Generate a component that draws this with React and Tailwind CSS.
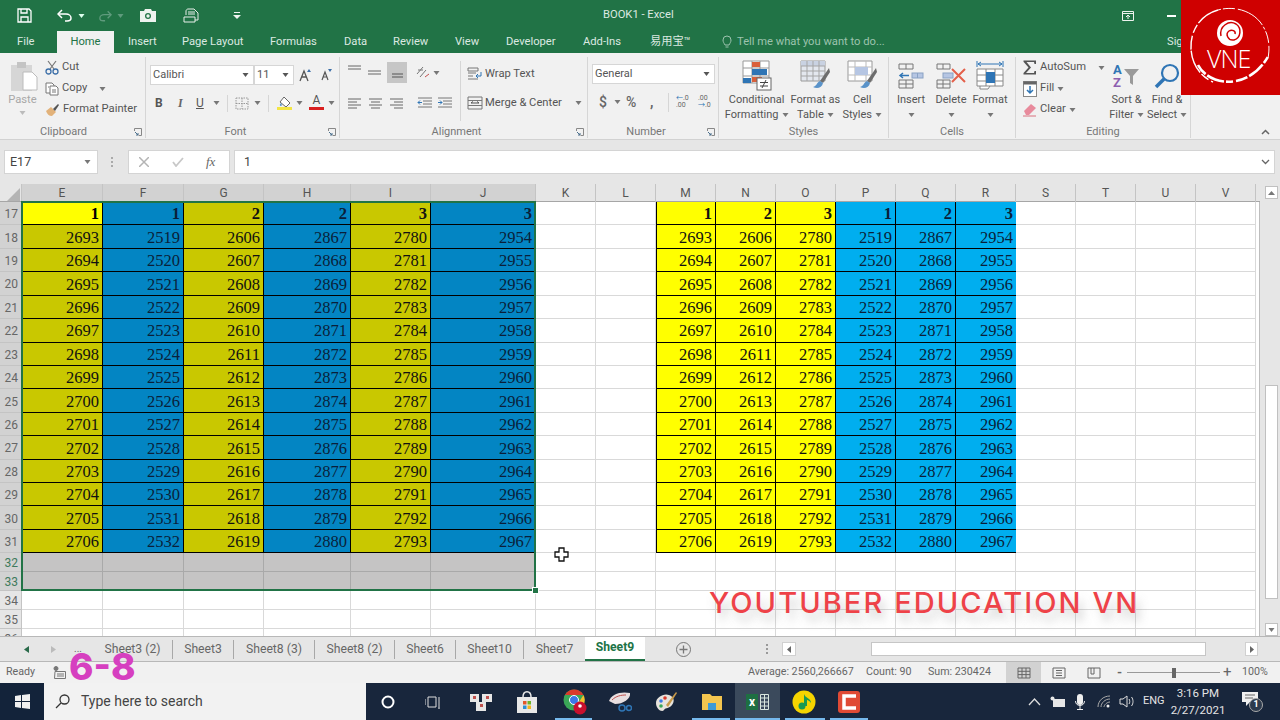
import React from "react";

const Caret = ({ c = "#555", className = "" }) => (
  <svg width="7" height="4" viewBox="0 0 7 4" className={className}><path d="M0.5 0h6L3.5 4z" fill={c} /></svg>
);

const Lines = ({ items, c = "#666" }) => (
  <svg width="15" height="13" viewBox="0 0 15 13" stroke={c} strokeWidth="1">
    {items.map(([a, b, y], i) => <path key={i} d={`M${a} ${y}H${b}`} />)}
  </svg>
);

const Launcher = () => (
  <svg width="8" height="8" viewBox="0 0 8 8" fill="none" stroke="#888"><path d="M0.5 3V0.5H7.5V7.5H4.5" /><path d="M1 4l3 3M2 7h2V5" stroke="#4a6f8c" /></svg>
);

const GroupLabel = ({ label, launcher, pr = "pr-[14px]" }) => (
  <div className={`h-[13px] mt-[1px] grid grid-cols-[1fr_auto_1fr] items-center text-[#777] text-[11px] leading-none ${launcher ? pr : ""}`}>
    <span />
    <span>{label}</span>
    <span className={`justify-self-end flex ${launcher ? (pr === "pr-[14px]" ? "-mr-[11px]" : "-mr-[15px]") : ""}`}>{launcher && <Launcher />}</span>
  </div>
);

const Group = ({ w, label, launcher, pr, children }) => (
  <div className={`${w} mt-[4px] h-[81px] flex flex-col border-r border-[#d6d6d6] shrink-0`}>
    <div className="h-[67px] flex">{children}</div>
    <GroupLabel label={label} launcher={launcher} pr={pr} />
  </div>
);

const Combo = ({ w, text }) => (
  <div className={`${w} h-[20px] bg-white border border-[#d6d6d6] flex items-center justify-between pl-[2px] pr-[4px] text-[#555] text-[11px]`}>
    <span>{text}</span><Caret />
  </div>
);

const BigBtn = ({ w, icon, l1, l2, caret = true }) => (
  <div className={`${w} flex flex-col items-center text-[#555] text-[11px] leading-[15px]`}>
    <div className="h-[32px] mt-[3px] flex items-center justify-center">{icon}</div>
    <div className="whitespace-nowrap">{l1}</div>
    <div className="flex items-center gap-[3px] whitespace-nowrap h-[15px]">{l2}{caret && <Caret c="#777" />}</div>
  </div>
);

const CondIcon = () => (
  <svg width="30" height="32" viewBox="0 0 30 32">
    <path d="M1 1h26v22H1zM1 8h26M1 16h26M10 1v22M18 1v22" fill="#fff" stroke="#999" />
    <rect x="10" y="2" width="8" height="5" fill="#d9603b" /><rect x="10" y="9" width="15" height="6" fill="#2f75b5" /><rect x="10" y="17" width="10" height="5" fill="#d9603b" />
    <rect x="1" y="18" width="8" height="5" fill="#2f75b5" />
    <rect x="15" y="18" width="14" height="12" fill="#fff" stroke="#666" />
    <path d="M18 22.500h8M18 26h8M24 20l-4 8" stroke="#444" fill="none" />
  </svg>
);

const TableIcon = () => (
  <svg width="30" height="32" viewBox="0 0 30 32">
    <path d="M1 1h24v20H1z" fill="#e3e7ee" stroke="#999" />
    <rect x="1" y="1" width="24" height="5" fill="#c9d2e2" />
    <path d="M1 6h24M1 11h24M1 16h24M7 1v20M13 1v20M19 1v20" stroke="#a5a5a5" fill="none" />
    <path d="M29 8l-9 13 3 2 7-11z" fill="#6d6d6d" /><path d="M20 21c-3 1-3 5-7 6 4 2 9 1 10-4z" fill="#5a93c9" />
  </svg>
);

const CellStyleIcon = () => (
  <svg width="30" height="32" viewBox="0 0 30 32">
    <path d="M1 1h24v20H1z" fill="#fff" stroke="#999" />
    <path d="M1 7h24M1 15h24M8 1v20M19 1v20" stroke="#bbb" fill="none" />
    <rect x="8" y="7" width="13" height="8" fill="#b6c6e3" />
    <path d="M29 8l-9 13 3 2 7-11z" fill="#6d6d6d" /><path d="M20 21c-3 1-3 5-7 6 4 2 9 1 10-4z" fill="#5a93c9" />
  </svg>
);

const InsertIcon = () => (
  <svg width="26" height="26" viewBox="0 0 26 26" fill="none" stroke="#777">
    <path d="M1 1h14v5H1zM8 1v5M1 17h14v8H1zM1 21h14M8 17v8" />
    <rect x="14" y="10" width="11" height="5" fill="#b6c6e3" stroke="#8aa2c4" /><path d="M19.500 10v5" stroke="#8aa2c4" />
    <path d="M11 12.500H2M5 10l-3 2.500 3 2.500" stroke="#2f75b5" strokeWidth="1.500" />
  </svg>
);

const DeleteIcon = () => (
  <svg width="30" height="26" viewBox="0 0 30 26" fill="none" stroke="#777">
    <path d="M1 1h13v5H1zM7 1v5M1 17h13v8H1zM1 21h13M7 17v8" />
    <rect x="7" y="10" width="10" height="5" fill="#b6c6e3" stroke="#8aa2c4" />
    <path d="M16 6l13 13M29 6L16 19" stroke="#e4604a" strokeWidth="2" />
  </svg>
);

const FormatIcon = () => (
  <svg width="28" height="32" viewBox="0 0 28 32" fill="none" stroke="#888">
    <path d="M1 1v6M27 1v6M2 4h24M2 4l3-2M2 4l3 2M26 4l-3-2M26 4l-3 2" stroke="#2f75b5" />
    <path d="M1 9h26v17H1zM1 15h26M1 21h26M10 9v17M19 9v17M4 26v3h8l2-3" fill="#fff" />
    <rect x="10" y="12" width="9" height="11" fill="#2f75b5" stroke="none" />
  </svg>
);

const Ribbon = () => (
  <div className="h-[87px] bg-[#f1f1f1] border-b border-[#d2d2d2] flex text-[#555] text-[11.2px]">
    <Group w="w-[146px]" label="Clipboard" launcher pr="pr-[18px]">
      <div className="w-[45px] flex flex-col items-center text-[#a8a8a8]">
        <svg width="28" height="32" viewBox="0 0 28 32" className="mt-[4px] ml-[3px]">
          <rect x="1" y="4" width="21" height="26" fill="#d6d6d6" /><rect x="7" y="1" width="9" height="6" fill="#c4c4c4" />
          <path d="M13 11h9l5 5v13H13z" fill="#fff" stroke="#bcbcbc" />
        </svg>
        <div className="-mt-[1px] text-[11.2px] leading-[15px]">Paste</div>
        <Caret c="#bbb" className="mt-[4px]" />
      </div>
      <div className="flex flex-col text-[#555]">
        <div className="h-[21px] flex items-center gap-[3px]">
          <svg width="14" height="15" viewBox="0 0 14 15" fill="none"><path d="M3 1l6 8M11 1L5 9" stroke="#777" strokeWidth="1.200" /><circle cx="3.500" cy="11.500" r="2.500" stroke="#3d6fa8" strokeWidth="1.300" /><circle cx="10.500" cy="11.500" r="2.500" stroke="#3d6fa8" strokeWidth="1.300" /></svg>
          <span>Cut</span>
        </div>
        <div className="h-[21px] flex items-center gap-[3px]">
          <svg width="14" height="14" viewBox="0 0 14 14" fill="#fff" stroke="#777"><path d="M1 1h6l2 2v8H1z" /><path d="M5 4h6l2 2v7H5z" /><path d="M3 5h1M7 8h4M7 10h4" /></svg>
          <span>Copy</span><Caret c="#777" className="ml-[9px]" />
        </div>
        <div className="h-[21px] flex items-center gap-[3px]">
          <svg width="15" height="14" viewBox="0 0 15 14"><path d="M1 8l5-4 5 5-4 4c-3 0-5-2-6-5z" fill="#e2b27a" /><path d="M8 6l5-5 1 1-4 6z" fill="#555" /></svg>
          <span>Format Painter</span>
        </div>
      </div>
    </Group>

    <Group w="w-[194px]" label="Font" launcher>
      <div className="flex flex-col pl-[4px] pt-[8px]">
        <div className="flex items-center">
          <Combo w="w-[104px]" text="Calibri" />
          <Combo w="w-[40px]" text="11" />
          <svg width="13" height="13" viewBox="0 0 13 13" className="ml-[5px]"><path d="M1 12L5 2l4 10M3 8h4" stroke="#555" fill="none" strokeWidth="1.300" /><path d="M8 3l2-3 2 3z" fill="#3d6fa8" /></svg>
          <svg width="11" height="12" viewBox="0 0 11 12" className="ml-[9px]"><path d="M1 11L4 3l3 8M2.500 8h3" stroke="#555" fill="none" strokeWidth="1.200" /><path d="M7 0l2 3 2-3z" fill="#3d6fa8" /></svg>
        </div>
        <div className="flex items-center mt-[8px] h-[20px]">
          <span className="ml-[5px] w-[23px] font-bold text-[#555] text-[12px]">B</span>
          <span className="w-[18px] italic font-bold text-[#666] text-[12px] [font-family:'Liberation_Serif',serif]">I</span>
          <span className="w-[17px] underline text-[#555] text-[12px]">U</span>
          <Caret c="#777" />
          <span className="w-px h-[17px] bg-[#d6d6d6] ml-[7px]" />
          <svg width="14" height="13" viewBox="0 0 14 13" className="ml-[7px]" fill="none" stroke="#999" strokeDasharray="1.500 1"><path d="M1 1h12v11H1zM7 1v11M1 6.500h12" /></svg>
          <Caret c="#777" className="ml-[5px]" />
          <span className="w-px h-[17px] bg-[#d6d6d6] ml-[7px]" />
          <div className="ml-[8px] flex flex-col items-center">
            <svg width="14" height="11" viewBox="0 0 14 11"><path d="M6 1l6 6-4 4-6-5z" fill="#fff" stroke="#666" /><path d="M3 7c-2 2-1 3 0 3s1-2 0-3z" fill="#5a93c9" /></svg>
            <span className="w-[15px] h-[3px] bg-[#f3e545]" />
          </div>
          <Caret c="#777" className="ml-[4px]" />
          <div className="ml-[6px] flex flex-col items-center leading-none">
            <span className="text-[12px] h-[11px] -mt-[2px] text-[#555]">A</span>
            <span className="w-[15px] h-[3px] mt-[2px] bg-[#d92020]" />
          </div>
          <Caret c="#777" className="ml-[4px]" />
        </div>
      </div>
    </Group>

    <div className="w-[248px] mt-[4px] h-[81px] flex flex-col border-r border-[#d6d6d6] shrink-0">
      <div className="h-[67px] flex">
        <div className="flex flex-col w-[121px] border-r border-[#d6d6d6] h-[60px] mt-[4px] pl-[7px]">
          <div className="flex items-center h-[23px]">
            <div className="w-[21px] flex -mt-[6px]"><Lines items={[[1, 14, 3], [1, 14, 6]]} /></div>
            <div className="w-[21px] flex -mt-[1px] ml-[-1px]"><Lines items={[[1, 14, 5], [1, 14, 8]]} /></div>
            <div className="w-[20px] h-[21px] bg-[#c6c6c6] flex items-center justify-center ml-[-1px]"><Lines items={[[2, 13, 8], [2, 13, 11]]} c="#555" /></div>
            <svg width="15" height="13" viewBox="0 0 15 13" className="ml-[9px]" fill="none" stroke="#777"><path d="M1 8l6-7M4 11l6-7M2 4h5" /><path d="M9 11l4-3" stroke="#c0504d" /></svg>
            <Caret c="#777" className="ml-[2px]" />
          </div>
          <div className="flex items-center h-[22px] mt-[8px]">
            <div className="w-[21px] flex"><Lines items={[[1, 14, 2], [1, 10, 5], [1, 14, 8], [1, 10, 11]]} /></div>
            <div className="w-[21px] flex"><Lines items={[[1, 14, 2], [3, 12, 5], [1, 14, 8], [3, 12, 11]]} /></div>
            <div className="w-[28px] flex"><Lines items={[[1, 14, 2], [5, 14, 5], [1, 14, 8], [5, 14, 11]]} /></div>
            <svg width="15" height="13" viewBox="0 0 15 13" stroke="#777"><path d="M1 1h14M6 4h9M6 7h9M1 10h14" /><path d="M5 5.500H1M3 3.500L1 5.500l2 2" stroke="#2f75b5" fill="none" /></svg>
            <svg width="15" height="13" viewBox="0 0 15 13" stroke="#777" className="ml-[5px]"><path d="M1 1h14M6 4h9M6 7h9M1 10h14" /><path d="M1 5.500h4M3 3.500l2 2-2 2" stroke="#2f75b5" fill="none" /></svg>
          </div>
        </div>
        <div className="flex flex-col pl-[6px] pt-[7px]">
          <div className="flex items-center gap-[2px] h-[20px] whitespace-nowrap">
            <svg width="16" height="15" viewBox="0 0 16 15" fill="none" stroke="#777"><path d="M1 1h10v3H1zM1 6h8M1 9h5M1 12h10" /><path d="M14 5v4h-5M11 7l-2 2 2 2" stroke="#2f75b5" /></svg>
            <span>Wrap Text</span>
          </div>
          <div className="flex items-center gap-[2px] h-[20px] mt-[9px] whitespace-nowrap">
            <svg width="16" height="14" viewBox="0 0 16 14" fill="none" stroke="#777"><path d="M1 1h14v12H1zM1 4.500h14M1 9.500h14" /><path d="M4 7h8M4 7l2-1.500M12 7l-2-1.500" stroke="#555" /></svg>
            <span className="w-[80px]">Merge &amp; Center</span><Caret c="#777" className="ml-[8px]" />
          </div>
        </div>
      </div>
      <GroupLabel label="Alignment" launcher />
    </div>

    <Group w="w-[131px]" label="Number" launcher>
      <div className="flex flex-col pl-[4px] pt-[7px]">
        <Combo w="w-[123px]" text="General" />
        <div className="flex items-center h-[20px] mt-[8px] text-[#666]">
          <span className="ml-[7px] w-[15px] text-[14px] font-medium">$</span>
          <Caret c="#777" />
          <span className="ml-[5px] w-[24px] text-[14px] font-medium">%</span>
          <span className="w-[18px] text-[14px] font-bold leading-[10px]">,</span>
          <span className="w-px h-[19px] bg-[#d6d6d6] mr-[7px]" />
          <span className="w-[22px] text-[7px] leading-[7px] text-[#666]"><span className="text-[#2f75b5]">←</span>.0<br />.00</span>
          <span className="w-[18px] text-[7px] leading-[7px] text-[#666]">.00<br /><span className="text-[#2f75b5]">→</span>.0</span>
        </div>
      </div>
    </Group>

    <Group w="w-[170px]" label="Styles">
      <BigBtn w="w-[76px]" icon={<CondIcon />} l1="Conditional" l2="Formatting" />
      <BigBtn w="w-[42px]" icon={<TableIcon />} l1="Format as" l2="Table" />
      <BigBtn w="w-[52px]" icon={<CellStyleIcon />} l1="Cell" l2="Styles" />
    </Group>

    <Group w="w-[127px]" label="Cells">
      <BigBtn w="w-[44px]" icon={<InsertIcon />} l1="Insert" l2="" />
      <BigBtn w="w-[36px]" icon={<DeleteIcon />} l1="Delete" l2="" />
      <BigBtn w="w-[42px]" icon={<FormatIcon />} l1="Format" l2="" />
    </Group>

    <Group w="w-[175px]" label="Editing">
      <div className="w-[90px] flex flex-col pl-[7px] text-[#555]">
        <div className="h-[21px] flex items-center gap-[3px]">
          <svg width="14" height="15" viewBox="0 0 14 15"><path d="M0.500 0.500H13V4H11.500L11 2H3.500L8 7.500 3 13H11L11.500 11H13V14.500H0.500V13L5.500 7.500 0.500 1.800z" fill="#555" /></svg>
          <span className="w-[47px]">AutoSum</span><Caret c="#777" className="ml-[8px]" />
        </div>
        <div className="h-[21px] flex items-center gap-[3px]">
          <svg width="14" height="16" viewBox="0 0 14 16"><rect x="0.500" y="0.500" width="13" height="15" fill="#fff" stroke="#888" /><rect x="0.500" y="0.500" width="13" height="3" fill="#666" /><path d="M7 5v7M4 9l3 3 3-3" stroke="#2f75b5" strokeWidth="1.500" fill="none" /></svg>
          <span>Fill</span><Caret c="#777" />
        </div>
        <div className="h-[21px] flex items-center gap-[3px]">
          <svg width="14" height="14" viewBox="0 0 14 14"><path d="M1 8l7-7 5 4-7 7H3z" fill="#e88a9c" /><path d="M0 13h13" stroke="#d9707f" /></svg>
          <span>Clear</span><Caret c="#777" />
        </div>
      </div>
      <BigBtn w="w-[41px]" icon={
        <div className="flex items-center">
          <div className="flex flex-col text-[13px] leading-[13px] font-bold w-[11px]">
            <span className="text-[#2f75b5]">A</span>
            <span className="text-[#8d5fb0]">Z</span>
          </div>
          <svg width="16" height="17" viewBox="0 0 16 17"><path d="M0 1h15L9 8v9l-3-2V8z" fill="#9a9a9a" /></svg>
        </div>} l1="Sort &" l2="Filter" />
      <BigBtn w="w-[40px]" icon={
        <svg width="26" height="26" viewBox="0 0 26 26" fill="none"><circle cx="16" cy="10" r="8" stroke="#2f75b5" strokeWidth="2.200" /><path d="M10 16L2 24" stroke="#2f75b5" strokeWidth="3.500" /></svg>} l1="Find &" l2="Select" />
    </Group>

    <div className="flex-1 flex items-end justify-end pb-[4px] pr-[10px]">
      <svg width="9" height="6" viewBox="0 0 9 6" fill="none" stroke="#666" strokeWidth="1.500"><path d="M1 5l3.500-3.500L8 5" /></svg>
    </div>
  </div>
);

const cols = ["E", "F", "G", "H", "I", "J", "K", "L", "M", "N", "O", "P", "Q", "R", "S", "T", "U", "V"];
const gridCls = "grid grid-cols-[22px_81px_81px_80px_87px_80px_105px_60px_60px_60px_60px_60px_60px_60px_60px_60px_60px_60px_60px_4px]";
const leftKey = { E: 2693, F: 2519, G: 2606, H: 2867, I: 2780, J: 2954 };
const rightKey = { M: 2693, N: 2606, O: 2780, P: 2519, Q: 2867, R: 2954 };
const head17 = { E: 1, F: 1, G: 2, H: 2, I: 3, J: 3, M: 1, N: 2, O: 3, P: 1, Q: 2, R: 3 };
const olive = "EGI";
const blue = "FHJ";
const yellow = "MNO";
const sky = "PQR";

function cellFill(c, row) {
  if (row === 17 && c === "E") return "bg-[#ffff00] border-r border-b border-black text-black";
  if (olive.includes(c)) return "bg-[#c9c800] border-r border-b border-black text-[#111]";
  if (blue.includes(c)) return "bg-[#0385c3] border-r border-b border-black text-[#0a1f3a]";
  if (c === "M") return "bg-[#ffff00] border-l border-r border-b border-black text-[#111]";
  if (yellow.includes(c)) return "bg-[#ffff00] border-r border-b border-black text-[#111]";
  if (c === "R") return "bg-[#00aeef] border-b border-black text-[#0a1f3a]";
  if (sky.includes(c)) return "bg-[#00aeef] border-r border-b border-black text-[#0a1f3a]";
  return "";
}

const GridRow = ({ row }) => {
  const data = row >= 17 && row <= 31;
  const sel = row <= 33;
  const h = data ? "h-[23.43px]" : "h-[19px]";
  return (
    <div className={gridCls}>
      <div className={`${h} flex items-center justify-end pr-[3px] pt-[2px] text-[12px] border-b border-[#c4c4c4] border-r ${sel ? "bg-[#d2d2d2]" : "bg-[#e6e6e6]"} ${row === 32 || row === 33 ? "text-[#3f7a5c]" : "text-[#666]"}`}>{row}</div>
      {cols.map((c) => {
        const isData = data && (c in leftKey || c in rightKey);
        if (isData) {
          const base = leftKey[c] || rightKey[c];
          const v = row === 17 ? head17[c] : base + row - 18;
          return (
            <div key={c} className={`${h} ${cellFill(c, row)} flex items-center justify-end pr-[3px] pt-[3px] [font-family:'Liberation_Serif',serif] text-[16.5px] ${row === 17 ? "font-bold" : ""}`}>{v}</div>
          );
        }
        const grey = (row === 32 || row === 33) && c in leftKey;
        return <div key={c} className={`${h} ${grey ? "bg-[#c5c4c4] border-r border-b border-[#a9a9a9]" : "border-r border-b border-[#d9d9d9]"}`} />;
      })}
      <div className={`${h} border-r border-[#bdbdbd]`} />
    </div>
  );
};

const Sheet = () => (
  <div className="relative h-[452px] flex overflow-hidden bg-white">
    <div className="w-[1260px] flex flex-col">
      <div className={`${gridCls} h-[18px] bg-[#e6e6e6] border-b border-[#a6a6a6] text-[12px] text-[#555]`}>
        <div className="flex items-end justify-end pr-[1px] pb-[1px] border-r border-[#c4c4c4]">
          <svg width="13" height="13" viewBox="0 0 13 13"><path d="M13 0v13H0z" fill="#b4b4b4" /></svg>
        </div>
        {cols.map((c) => (
          <div key={c} className={`flex items-center justify-center border-r border-[#c4c4c4] ${c in leftKey ? "bg-[#d2d2d2]" : ""}`}>{c}</div>
        ))}
        <div />
      </div>
      {Array.from({ length: 20 }, (_, i) => <GridRow key={i} row={17 + i} />)}
    </div>
    <div className="w-[20px] bg-[#e6e6e6] flex flex-col items-center pt-[2px] pl-[2px]">
      <div className="w-[13px] h-[13px] bg-white border border-[#c0c0c0] flex items-center justify-center"><svg width="7" height="4" viewBox="0 0 7 4"><path d="M0 4h7L3.500 0z" fill="#777" /></svg></div>
      <div className="h-[186px]" />
      <div className="w-[13px] h-[214px] bg-white border border-[#c0c0c0]" />
      <div className="h-[24px]" />
      <div className="w-[13px] h-[13px] bg-white border border-[#c0c0c0] flex items-center justify-center"><Caret c="#777" /></div>
    </div>

    {/* selection */}
    <div className="absolute left-[21px] top-[17px] w-[515px] h-[390px] border-2 border-[#217346]">
      <div className="absolute -right-[5px] -bottom-[5px] w-[7px] h-[7px] bg-[#217346] border border-white" />
    </div>
    {/* cursor */}
    <svg width="15" height="15" viewBox="0 0 15 15" className="absolute left-[554px] top-[363px]"><path d="M5 1h5v4h4v5h-4v4H5v-4H1V5h4z" fill="#fff" stroke="#111" strokeWidth="1.300" /></svg>
    {/* watermark */}
    <div className="absolute left-[709px] top-[402px] text-[29px] leading-[34px] font-medium text-[#ee4248] tracking-[2.1px] whitespace-nowrap [font-family:Inter,sans-serif] [text-shadow:4px_8px_10px_rgba(120,120,120,0.35)]">YOUTUBER EDUCATION VN</div>
  </div>
);

const Tab = ({ w, t }) => (
  <div className={`${w} h-[19px] flex items-center justify-center border-r border-[#a8a8a8] text-[12.2px] text-[#666] shrink-0`}>{t}</div>
);

const TabsBar = () => (
  <div className="h-[26px] bg-[#e6e6e6] border-t border-[#b8b8b8] border-b flex items-center relative">
    <div className="w-[93px] flex items-center text-[#666]">
      <svg width="5" height="7" viewBox="0 0 5 7" className="ml-[24px]"><path d="M5 0v7L0 3.500z" fill="#2a6a4a" /></svg>
      <svg width="5" height="7" viewBox="0 0 5 7" className="ml-[22px]"><path d="M0 0v7l5-3.500z" fill="#bbb" /></svg>
      <span className="ml-[18px] text-[10px] leading-none">...</span>
    </div>
    <Tab w="w-[80px]" t="Sheet3 (2)" />
    <Tab w="w-[61px]" t="Sheet3" />
    <Tab w="w-[81px]" t="Sheet8 (3)" />
    <Tab w="w-[80px]" t="Sheet8 (2)" />
    <Tab w="w-[61px]" t="Sheet6" />
    <Tab w="w-[68px]" t="Sheet10" />
    <div className="w-[61px] h-[19px] flex items-center justify-center text-[12.2px] text-[#666]">Sheet7</div>
    <div className="w-[60px] h-[24px] -mt-[1px] bg-white border-b-2 border-[#217346] flex items-center justify-center text-[12.2px] font-bold text-[#217346]">Sheet9</div>
    <svg width="15" height="15" viewBox="0 0 15 15" className="ml-[31px]" fill="none" stroke="#777"><circle cx="7.500" cy="7.500" r="7" /><path d="M7.500 3.500v8M3.500 7.500h8" strokeWidth="1.300" /></svg>
    <span className="ml-[75px] w-[2px] h-[10px] border-l-2 border-dotted border-[#999]" />
    <div className="ml-[14px] w-[14px] h-[14px] bg-white border border-[#d0d0d0] flex items-center justify-center"><svg width="4" height="7" viewBox="0 0 4 7"><path d="M4 0v7L0 3.500z" fill="#666" /></svg></div>
    <div className="ml-[75px] w-[335px] h-[14px] bg-white border border-[#c6c6c6]" />
    <div className="ml-[39px] w-[13px] h-[14px] bg-white border border-[#d0d0d0] flex items-center justify-center"><svg width="4" height="7" viewBox="0 0 4 7"><path d="M0 0v7l4-3.500z" fill="#666" /></svg></div>
  </div>
);

const StatusBar = () => (
  <div className="h-[21px] bg-[#f1f1f1] flex items-center text-[10.7px] text-[#666]">
    <span className="ml-[6px] w-[47px]">Ready</span>
    <svg width="13" height="13" viewBox="0 0 13 13" fill="none" stroke="#777"><circle cx="3" cy="2.500" r="2" fill="#777" /><path d="M2 5.500h10.500v7H1.500zM4 8h7M4 10h7" /></svg>
    <span className="ml-[682px] w-[118px] whitespace-nowrap">Average: 2560,266667</span>
    <span className="w-[62px] whitespace-nowrap">Count: 90</span>
    <span className="w-[78px] whitespace-nowrap">Sum: 230424</span>
    <div className="w-[35px] h-[21px] bg-[#d2d2d2] flex items-center justify-center">
      <svg width="14" height="12" viewBox="0 0 14 12" fill="none" stroke="#666"><path d="M1 1h12v10H1zM1 4.300h12M1 7.600h12M5 1v10M9 1v10" /></svg>
    </div>
    <svg width="14" height="12" viewBox="0 0 14 12" fill="none" stroke="#666" className="ml-[11px]"><path d="M1 1h12v10H1zM4 3.500h6M4 6h6M4 8.500h6" /></svg>
    <svg width="14" height="12" viewBox="0 0 14 12" fill="none" stroke="#666" className="ml-[21px]"><path d="M1 1h12v10H1zM7 1v6H4V1" /></svg>
    <span className="ml-[16px] text-[13px] font-bold w-[10px]">-</span>
    <div className="w-[93px] h-px bg-[#999] flex justify-center items-center"><span className="w-[4px] h-[10px] bg-[#666]" /></div>
    <span className="ml-[3px] text-[15px] w-[19px] leading-none">+</span>
    <span className="w-[30px]">100%</span>
  </div>
);

const Taskbar = () => (
  <div className="h-[37px] bg-[#18263c] flex items-center relative text-white">
    <div className="w-[44px] h-full bg-[#13233a] flex items-center justify-center">
      <svg width="15" height="15" viewBox="0 0 15 15" fill="#f0f0f0"><path d="M0 2l6-1v6H0zM7 1l8-1v7H7zM0 8h6v6l-6-1zM7 8h8v7l-8-1z" /></svg>
    </div>
    <div className="w-[322px] h-full bg-[#f2f2f2] flex items-center text-[#444]">
      <svg width="15" height="15" viewBox="0 0 15 15" fill="none" stroke="#333" className="ml-[11px]" strokeWidth="1.300"><circle cx="9.500" cy="5.500" r="4.500" /><path d="M6 9l-5 5" /></svg>
      <span className="ml-[11px] text-[14px] whitespace-nowrap">Type here to search</span>
    </div>
    <svg width="14" height="14" viewBox="0 0 14 14" fill="none" stroke="#fff" strokeWidth="2" className="ml-[15px]"><circle cx="7" cy="7" r="5.500" /></svg>
    <svg width="16" height="14" viewBox="0 0 16 14" fill="none" stroke="#ddd" className="ml-[30px]"><path d="M3 2h8v10H3zM0 4v6M14 2v10" /><circle cx="14" cy="13" r="0.500" /></svg>
    <svg width="24" height="20" viewBox="0 0 24 20" className="ml-[28px]"><path d="M1 2h9v8H1zM13 2h10v8H13zM7 10h10v9H7z" fill="#e6e6e6" /><path d="M4 4h3v3H4z" fill="#c0504d" /><path d="M17 4h3v3h-3z" fill="#c0504d" /><path d="M11 12h3v3h-3z" fill="#c0504d" /></svg>
    <svg width="22" height="22" viewBox="0 0 22 22" className="ml-[23px]"><path d="M1 6h20v16H1z" fill="#e8e8e8" /><path d="M7 6c0-7 8-7 8 0" fill="none" stroke="#e8e8e8" strokeWidth="1.500" /><rect x="7" y="10" width="3.500" height="3.500" fill="#e2582a" /><rect x="11.500" y="10" width="3.500" height="3.500" fill="#6bb42b" /><rect x="7" y="14.500" width="3.500" height="3.500" fill="#2a8fd4" /><rect x="11.500" y="14.500" width="3.500" height="3.500" fill="#f2b71e" /></svg>
    <svg width="24" height="26" viewBox="0 0 24 26" className="ml-[25px]">
      <circle cx="11" cy="11" r="10.500" fill="#3aa757" />
      <path d="M2 6a10.500 10.500 0 0 1 18.500 0H11z" fill="#d93a2b" />
      <path d="M20.500 6A10.500 10.500 0 0 1 12 21.500L16 13z" fill="#f3c12d" />
      <circle cx="11" cy="11" r="4.500" fill="#3b78e7" stroke="#fff" />
      <circle cx="17" cy="19" r="6.500" fill="#c8102e" /><circle cx="17" cy="17" r="1.800" fill="#fff" />
    </svg>
    <svg width="24" height="22" viewBox="0 0 24 22" className="ml-[21px]"><path d="M1 10C3 3 13 0 22 2c1 6-7 11-15 11z" fill="#e8dfe0" /><path d="M4 9c4-4 9-5 14-5" stroke="#c0504d" fill="none" /><circle cx="14" cy="17" r="3" fill="none" stroke="#2f75b5" strokeWidth="1.500" /><circle cx="21" cy="17" r="2.500" fill="none" stroke="#2f75b5" strokeWidth="1.500" /></svg>
    <svg width="24" height="24" viewBox="0 0 24 24" className="ml-[22px]"><path d="M2 13C2 7 10 3 15 5s6 6 3 10-6 2-8 5-8-1-8-7z" fill="#e7e3dc" /><circle cx="7" cy="11" r="1.800" fill="#3b78e7" /><circle cx="11" cy="8" r="1.800" fill="#d93a2b" /><circle cx="7" cy="16" r="1.800" fill="#3aa757" /><path d="M12 15L22 2l1 1-9 14z" fill="#c89a4a" /></svg>
    <svg width="22" height="18" viewBox="0 0 22 18" className="ml-[23px]"><path d="M1 1h8l2 2h10v14H1z" fill="#f3c54f" /><rect x="7" y="10" width="8" height="7" fill="#3e9ad6" /></svg>
    <div className="ml-[12px] w-[45px] h-full bg-[#3b4a5c] flex items-center justify-center gap-[2px]">
      <span className="text-[12px] font-bold text-white bg-[#1e6f42] w-[12px] h-[16px] flex items-center justify-center leading-none">x</span>
      <svg width="9" height="16" viewBox="0 0 9 16" fill="none" stroke="#d8e6de"><path d="M0.500 0.500h8v15h-8zM0.500 4h8M0.500 8h8M0.500 12h8M4.500 0.500v15" /></svg>
    </div>
    <svg width="24" height="24" viewBox="0 0 24 24" className="ml-[12px]"><circle cx="12" cy="12" r="11.500" fill="#f5d400" /><circle cx="10" cy="16" r="3.500" fill="#199a52" /><path d="M12 16V4c1 4 7 4 7 9-2-3-4-3-4-3v6z" fill="#199a52" /></svg>
    <svg width="22" height="24" viewBox="0 0 22 24" className="ml-[22px]"><rect x="0" y="1" width="22" height="22" rx="3" fill="#e04a35" /><path d="M18 6H6v12h12" fill="none" stroke="#fff" strokeWidth="3.500" /></svg>

    <svg width="13" height="8" viewBox="0 0 13 8" fill="none" stroke="#ddd" strokeWidth="1.300" className="ml-[168px]"><path d="M1 7l5.500-6L12 7" /></svg>
    <svg width="16" height="12" viewBox="0 0 16 12" className="ml-[9px]"><rect x="3" y="3" width="12" height="8" fill="#e6e6e6" /><circle cx="2.500" cy="2.500" r="2" fill="#e6e6e6" /></svg>
    <svg width="10" height="16" viewBox="0 0 10 16" className="ml-[9px]"><rect x="2" y="0" width="6" height="11" rx="3" fill="#eee" /><path d="M0.500 7c0 6 9 6 9 0M5 12v3M2 15.500h6" stroke="#eee" fill="none" /></svg>
    <svg width="14" height="13" viewBox="0 0 14 13" fill="none" stroke="#aaa" className="ml-[12px]"><path d="M1 12c0-6 5-11 12-11M4 12c0-4 4-8 9-8M7 12c0-2 3-5 6-5" /><circle cx="11" cy="11" r="1.500" fill="#eee" stroke="none" /></svg>
    <svg width="15" height="13" viewBox="0 0 15 13" fill="none" stroke="#ddd" className="ml-[8px]"><path d="M1 4h3l4-3v11L4 9H1zM10 4c1 1.500 1 3.500 0 5M12.500 2c2 2.500 2 6.500 0 9" /></svg>
    <span className="ml-[9px] text-[11px] text-[#e4e4e4] w-[22px] whitespace-nowrap">ENG</span>
    <div className="ml-[5px] w-[56px] flex flex-col items-center text-[11.5px] leading-[17px] text-[#e4e4e4] whitespace-nowrap">
      <span>3:16 PM</span><span>2/27/2021</span>
    </div>
    <div className="ml-[16px] relative w-[20px] h-[20px]">
      <svg width="16" height="15" viewBox="0 0 16 15"><path d="M0 0h16v10H8l-4 4v-4H0z" fill="#f0f0f0" /><path d="M3 3h10M3 6h8" stroke="#666" /></svg>
      <span className="absolute left-[7px] top-[6px] w-[14px] h-[14px] rounded-full bg-[#2c3a4d] border border-[#aaa] flex items-center justify-center text-[9px] font-bold leading-none">1</span>
    </div>
    {/* running indicators */}
    <span className="absolute left-[555px] bottom-0 w-[37px] h-[2px] bg-[#76b9ed]" />
    <span className="absolute left-[692px] bottom-0 w-[38px] h-[2px] bg-[#76b9ed]" />
    <span className="absolute left-[735px] bottom-0 w-[45px] h-[2px] bg-[#76b9ed]" />
    <span className="absolute left-[785px] bottom-0 w-[40px] h-[2px] bg-[#76b9ed]" />
    <span className="absolute left-[830px] bottom-0 w-[38px] h-[2px] bg-[#76b9ed]" />
  </div>
);

const Logo = () => (
  <div className="absolute right-0 top-0 w-[99px] h-[95px] bg-[#cf0000] text-white">
    <svg width="84" height="82" viewBox="0 0 84 82" fill="none" stroke="#fff" className="absolute left-[7px] top-[7px]">
      <path d="M30 3C12 8 2 24 3 42c1 16 10 28 22 33" strokeWidth="1.400" strokeDasharray="24 2 9 3 14 1" />
      <path d="M30 3c18-5 38 2 46 18 5 9 6 20 4 30" strokeWidth="1" strokeDasharray="3 2 12 3 30 2" />
      <path d="M10 58C20 78 60 86 81 48" strokeWidth="2.600" strokeDasharray="12 2 18 2 7 3" />
      <circle cx="42" cy="26" r="13" fill="#fff" stroke="none" />
      <path d="M33 29c-2-10 8-16 15-12 6 4 5 14-2 16-6 1-9-6-5-9 3-2 7 0 6 3" stroke="#cf0000" strokeWidth="1.500" />
    </svg>
    <span className="absolute left-[26px] top-[43px] text-[25px] leading-[30px] font-light [font-family:'Open_Sans',sans-serif] tracking-[-1px]">VNE</span>
  </div>
);

export default function App() {
  return (
    <div className="relative w-[1280px] h-[720px] overflow-hidden flex flex-col bg-white [font-family:Roboto,'Noto_Sans_CJK_SC',sans-serif]">
      {/* Title bar */}
      <div className="h-[31px] bg-[#217346] flex items-center text-white">
        <div className="w-[603px] flex items-center shrink-0">
          <svg width="15" height="15" viewBox="0 0 15 15" fill="none" stroke="#fff" strokeWidth="1.300" className="ml-[17px]"><path d="M1 1h11l2 2v11H1z" /><path d="M4 1v4h6V1M4 14V9h7v5" /></svg>
          <svg width="15" height="13" viewBox="0 0 15 13" fill="none" stroke="#fff" strokeWidth="1.500" className="ml-[25px]"><path d="M5 1L1 5l4 4" /><path d="M1 5h8c3 0 5 2 5 4s-2 3-4 3H8" /></svg>
          <Caret c="#dfe" className="ml-[6px]" />
          <svg width="13" height="12" viewBox="0 0 15 13" fill="none" stroke="#5f9b7d" strokeWidth="1.500" className="ml-[14px]"><path d="M10 1l4 4-4 4" /><path d="M14 5H6C3 5 1 7 1 9s2 3 4 3h2" /></svg>
          <Caret c="#5f9b7d" className="ml-[5px]" />
          <svg width="16" height="13" viewBox="0 0 16 13" className="ml-[16px]"><path d="M0 2h4l1-2h6l1 2h4v11H0z" fill="#eef3ef" /><circle cx="8" cy="7" r="3" fill="#217346" /><circle cx="8" cy="7" r="1.700" fill="#eef3ef" /></svg>
          <svg width="17" height="15" viewBox="0 0 17 15" fill="none" stroke="#e8efe9" className="ml-[27px]"><path d="M1 9h11v5H1zM3 7V3c0-1 1-2 2-2h6l4 4v7h-3M5 4h7M5 6h7" /></svg>
          <svg width="8" height="8" viewBox="0 0 8 8" className="ml-[33px]" fill="#eef3ef"><path d="M1 0h6v1H1zM0 3h8L4 7z" /></svg>
        </div>
        <span className="w-[519px] text-[11.2px] text-[#dce9e1] whitespace-nowrap">BOOK1 - Excel</span>
        <svg width="12" height="10" viewBox="0 0 12 10" fill="none" stroke="#eef3ef"><path d="M0.500 0.500h11v9h-11zM0.500 2.500h11M6 8V4M4 6l2-2 2 2" /></svg>
        <span className="ml-[33px] w-[9px] h-[2px] bg-white" />
      </div>
      {/* Tabs */}
      <div className="h-[22px] bg-[#217346] flex items-center text-[11.2px] text-[#dce9e1] whitespace-nowrap">
        <span className="ml-[17px] w-[40px]">File</span>
        <div className="w-[57px] h-full bg-[#f1f1f1] text-[#217346] flex items-center justify-center mr-[14px]">Home</div>
        <span className="w-[54px]">Insert</span>
        <span className="w-[88px]">Page Layout</span>
        <span className="w-[74px]">Formulas</span>
        <span className="w-[49px]">Data</span>
        <span className="w-[62px]">Review</span>
        <span className="w-[51px]">View</span>
        <span className="w-[77px]">Developer</span>
        <span className="w-[67px]">Add-Ins</span>
        <span className="w-[72px]">易用宝™</span>
        <svg width="10" height="14" viewBox="0 0 10 14" fill="none" stroke="#9dc3ae" className="mr-[5px]"><path d="M3 10C2 8 1 7 1 5a4 4 0 0 1 8 0c0 2-1 3-2 5zM3.500 12h3" /></svg>
        <span className="w-[430px] text-[#9dc3ae]">Tell me what you want to do...</span>
        <span>Sig</span>
      </div>
      <Ribbon />
      {/* Formula bar */}
      <div className="h-[44px] bg-[#e6e6e6] flex items-start pt-[10px]">
        <div className="ml-[4px] w-[94px] h-[24px] bg-white border border-[#d4d4d4] flex items-center justify-between pl-[5px] pr-[6px] text-[12.5px] text-[#444]">
          <span>E17</span><Caret c="#777" />
        </div>
        <span className="ml-[13px] mt-[7px] w-[2px] h-[10px] border-l-2 border-dotted border-[#aaa]" />
        <div className="ml-[15px] w-[102px] h-[24px] bg-white border border-[#d4d4d4] flex items-center text-[#999]">
          <svg width="10" height="10" viewBox="0 0 10 10" stroke="#b4b4b4" strokeWidth="1.500" className="ml-[10px]"><path d="M0 0l10 10M10 0L0 10" /></svg>
          <svg width="12" height="10" viewBox="0 0 12 10" fill="none" stroke="#c8c8c8" strokeWidth="1.800" className="ml-[23px]"><path d="M1 5l3 4 7-8" /></svg>
          <span className="ml-[22px] italic text-[13px] [font-family:'Liberation_Serif',serif] text-[#666]">fx</span>
        </div>
        <div className="ml-[4px] w-[1041px] h-[24px] bg-white border border-[#d4d4d4] flex items-center justify-between pl-[9px] pr-[4px] text-[12.5px] text-[#444]">
          <span>1</span>
          <svg width="9" height="6" viewBox="0 0 9 6" fill="none" stroke="#666" strokeWidth="1.300"><path d="M1 1l3.500 3.500L8 1" /></svg>
        </div>
      </div>
      <Sheet />
      <TabsBar />
      <StatusBar />
      <Taskbar />
      <Logo />
      <div className="absolute left-[69px] top-[645px] text-[37px] leading-[44px] font-extrabold text-[#d63fc0] [font-family:Inter,sans-serif]">6-8</div>
    </div>
  );
}
